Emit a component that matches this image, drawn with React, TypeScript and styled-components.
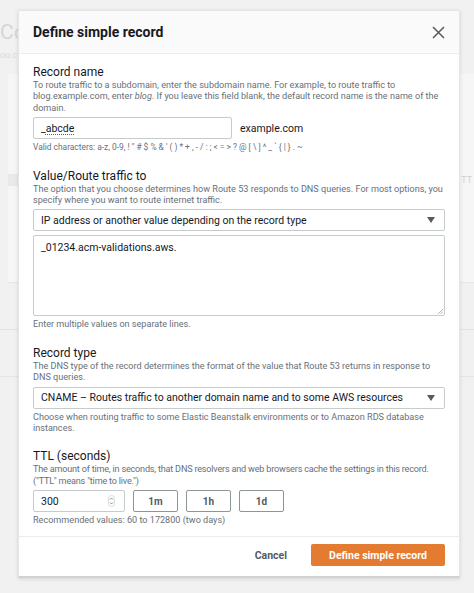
import styled, { createGlobalStyle } from 'styled-components';

const GlobalStyle = createGlobalStyle`
  html, body {
    margin: 0;
    padding: 0;
    background: #f1f1f1;
    font-family: Roboto, 'Liberation Sans', Arial, sans-serif;
  }
`;

const Page = styled.div`
  position: relative;
  width: 474px;
  height: 593px;
  overflow: hidden;
  background: #f1f1f1;
`;

// faded console page behind the modal, only the edges peek out
const BgHeading = styled.div`
  padding: 20px 0 0 0;
  font-size: 21px;
  color: #d6d6d6;
  line-height: 24px;
  white-space: nowrap;
`;

const BgSub = styled.div`
  margin-top: 6px;
  font-size: 9px;
  color: #d9d9d9;
  white-space: nowrap;
`;

const BgPanel = styled.div`
  margin: 14px 0 0 8px;
  padding: 12px 0 0 14px;
  height: 196px;
  background: #f6f6f6;
  border-bottom: 1px solid #e6e6e6;
`;

const BgPanelTitle = styled.div`
  font-size: 15px;
  font-weight: 700;
  color: #d8d8d8;
  white-space: nowrap;
`;

const BgPanelSub = styled.div`
  margin-top: 2px;
  font-size: 9px;
  color: #dcdcdc;
  white-space: nowrap;
`;

const BgBar = styled.div`
  margin: 58px 0 0 -14px;
  display: flex;
  justify-content: space-between;
  align-items: center;
  height: 12px;
`;

const BgBarBlock = styled.div`
  width: 10px;
  height: 12px;
  background: #e9e9e9;
`;

const BgBarText = styled.div`
  font-size: 9px;
  color: #d2d2d2;
  padding-right: 2px;
`;

const BgRow = styled.div`
  display: flex;
  align-items: center;
  height: 46px;
  padding-left: 22px;
  border-bottom: 1px solid #e4e4e4;
  font-size: 11px;
  color: #d8d8d8;
`;

const BgCircle = styled.div`
  width: 9px;
  height: 9px;
  border: 1.5px solid #e0d6d6;
  border-radius: 50%;
`;

// modal
const Overlay = styled.div`
  position: absolute;
  inset: 0;
  padding: 10px 0 0 18px;
`;

const Modal = styled.div`
  width: 442px;
  background: #ffffff;
  border: 1px solid #e4e6e6;
  border-bottom: 2px solid #cfd3d3;
  box-shadow: 0 1px 4px rgba(0, 0, 0, 0.12);
  box-sizing: border-box;
`;

const Header = styled.div`
  display: flex;
  align-items: center;
  justify-content: space-between;
  height: 43px;
  padding: 0 14px;
  background: #fafafa;
  border-bottom: 1px solid #eaeded;
  box-sizing: border-box;
`;

const Title = styled.h2`
  margin: 0;
  font-size: 14px;
  font-weight: 700;
  color: #16191f;
`;

const CloseButton = styled.button`
  display: flex;
  padding: 0;
  border: none;
  background: transparent;
  color: #545b64;
`;

const Body = styled.div`
  padding: 11px 14px 9px 14px;
  display: flex;
  flex-direction: column;
  gap: 15px;
`;

const Field = styled.div`
  display: flex;
  flex-direction: column;
`;

const Label = styled.div`
  font-size: 12px;
  line-height: 14px;
  color: #16191f;
`;

const Description = styled.div<{ $tight?: boolean }>`
  margin-top: 1px;
  font-size: 9.1px;
  line-height: 11.4px;
  letter-spacing: ${({ $tight }) => ($tight ? '-0.2px' : 'normal')};
  color: #687078;
`;

const Hint = styled(Description)<{ $small?: boolean }>`
  margin-top: 3px;
  font-size: ${({ $small }) => ($small ? '8.4px' : '9.1px')};
`;

const Control = styled.div<{ $width?: number; $height?: number }>`
  display: flex;
  flex-direction: ${({ $height }) => ($height ? 'column' : 'row')};
  align-items: ${({ $height }) => ($height ? 'flex-start' : 'center')};
  justify-content: space-between;
  width: ${({ $width }) => ($width ? `${$width}px` : '100%')};
  height: ${({ $height }) => ($height ? `${$height}px` : '22px')};
  padding: ${({ $height }) => ($height ? '5px 7px' : '0 9px 0 7px')};
  border: 1px solid #c6cccc;
  border-radius: 2px;
  background: #fff;
  box-sizing: border-box;
  font-size: 10.5px;
  color: #16191f;
`;

const NameRow = styled.div`
  display: flex;
  align-items: center;
  gap: 8px;
  margin-top: 3px;
`;

const Suffix = styled.span`
  font-size: 10.5px;
  color: #16191f;
`;

const Misspelled = styled.span`
  text-decoration: underline dotted #d13212;
  text-underline-offset: 2px;
`;

const StackedControls = styled.div`
  display: flex;
  flex-direction: column;
  gap: 4px;
  margin-top: 3px;
`;

const Grip = styled.svg`
  align-self: flex-end;
  margin: 0 -6px -4px 0;
`;

const TtlRow = styled.div`
  display: flex;
  align-items: center;
  gap: 8px;
  margin-top: 3px;
`;

const PresetButton = styled.button`
  width: 45px;
  height: 22px;
  padding: 0;
  border: 1px solid #8d9696;
  border-radius: 2px;
  background: #fff;
  font-family: inherit;
  font-size: 10px;
  font-weight: 700;
  color: #545b64;
`;

const Footer = styled.div`
  display: flex;
  align-items: center;
  justify-content: flex-end;
  gap: 24px;
  height: 37px;
  padding: 0 14px 2px 0;
  border-top: 1px solid #eaeded;
`;

const LinkButton = styled.button`
  padding: 0;
  border: none;
  background: transparent;
  font-family: inherit;
  font-size: 10.5px;
  font-weight: 700;
  color: #545b64;
`;

const PrimaryButton = styled.button`
  width: 134px;
  height: 22px;
  padding: 0;
  border: none;
  border-radius: 2px;
  background: #e37b30;
  font-family: inherit;
  font-size: 10.5px;
  font-weight: 700;
  color: #fff;
`;

const Caret = () => (
  <svg width="8" height="6" viewBox="0 0 8 6">
    <path d="M0 0h8L4 6z" fill="#545b64" />
  </svg>
);

const Spinner = () => (
  <svg width="7" height="12" viewBox="0 0 7 12">
    <rect x="0.5" y="0.5" width="6" height="11" rx="3" fill="none" stroke="#d5dbdb" />
    <path d="M2 4.5L3.5 3 5 4.5M2 7.5L3.5 9 5 7.5" fill="none" stroke="#687078" strokeWidth="0.8" />
  </svg>
);

const App = () => (
  <>
    <GlobalStyle />
    <Page>
      <BgHeading>Co</BgHeading>
      <BgSub>ou c</BgSub>
      <BgPanel>
        <BgPanelTitle>Si</BgPanelTitle>
        <BgPanelSub>Us</BgPanelSub>
        <BgBar>
          <BgBarBlock />
          <BgBarText>TT</BgBarText>
        </BgBar>
      </BgPanel>
      <BgRow>Ex</BgRow>
      <BgRow>
        <BgCircle />
      </BgRow>

      <Overlay>
        <Modal>
          <Header>
            <Title>Define simple record</Title>
            <CloseButton aria-label="Close">
              <svg width="13" height="13" viewBox="0 0 13 13">
                <path d="M1 1l11 11M12 1L1 12" stroke="currentColor" strokeWidth="1.5" />
              </svg>
            </CloseButton>
          </Header>

          <Body>
            <Field>
              <Label>Record name</Label>
              <Description>
                To route traffic to a subdomain, enter the subdomain name. For example, to route traffic to
                blog.example.com, enter <i>blog</i>. If you leave this field blank, the default record name is the
                name of the domain.
              </Description>
              <NameRow>
                <Control $width={199}>
                  <span>
                    _<Misspelled>abcde</Misspelled>
                  </span>
                </Control>
                <Suffix>example.com</Suffix>
              </NameRow>
              <Hint $small>
                Valid characters: a-z, 0-9, ! " # $ % &amp; ' ( ) * + , - / : ; &lt; = &gt; ? @ [ \ ] ^ _ ` {'{'} |{' '}
                {'}'} . ~
              </Hint>
            </Field>

            <Field>
              <Label>Value/Route traffic to</Label>
              <Description>
                The option that you choose determines how Route 53 responds to DNS queries. For most options, you
                specify where you want to route internet traffic.
              </Description>
              <StackedControls>
                <Control>
                  <span>IP address or another value depending on the record type</span>
                  <Caret />
                </Control>
                <Control $height={81}>
                  <span>_01234.acm-validations.aws.</span>
                  <Grip width="6" height="6" viewBox="0 0 6 6">
                    <path d="M1 6L6 1M3.5 6L6 3.5" stroke="#8d9696" strokeWidth="0.7" />
                  </Grip>
                </Control>
              </StackedControls>
              <Hint>Enter multiple values on separate lines.</Hint>
            </Field>

            <Field>
              <Label>Record type</Label>
              <Description>
                The DNS type of the record determines the format of the value that Route 53 returns in response to
                DNS queries.
              </Description>
              <StackedControls>
                <Control>
                  <span>CNAME – Routes traffic to another domain name and to some AWS resources</span>
                  <Caret />
                </Control>
              </StackedControls>
              <Hint>Choose when routing traffic to some Elastic Beanstalk environments or to Amazon RDS database instances.</Hint>
            </Field>

            <Field>
              <Label>TTL (seconds)</Label>
              <Description $tight>
                The amount of time, in seconds, that DNS resolvers and web browsers cache the settings in this record.
                ("TTL" means "time to live.")
              </Description>
              <TtlRow>
                <Control $width={92}>
                  <span>300</span>
                  <Spinner />
                </Control>
                <PresetButton>1m</PresetButton>
                <PresetButton>1h</PresetButton>
                <PresetButton>1d</PresetButton>
              </TtlRow>
              <Hint>Recommended values: 60 to 172800 (two days)</Hint>
            </Field>
          </Body>

          <Footer>
            <LinkButton>Cancel</LinkButton>
            <PrimaryButton>Define simple record</PrimaryButton>
          </Footer>
        </Modal>
      </Overlay>
    </Page>
  </>
);

export default App;
